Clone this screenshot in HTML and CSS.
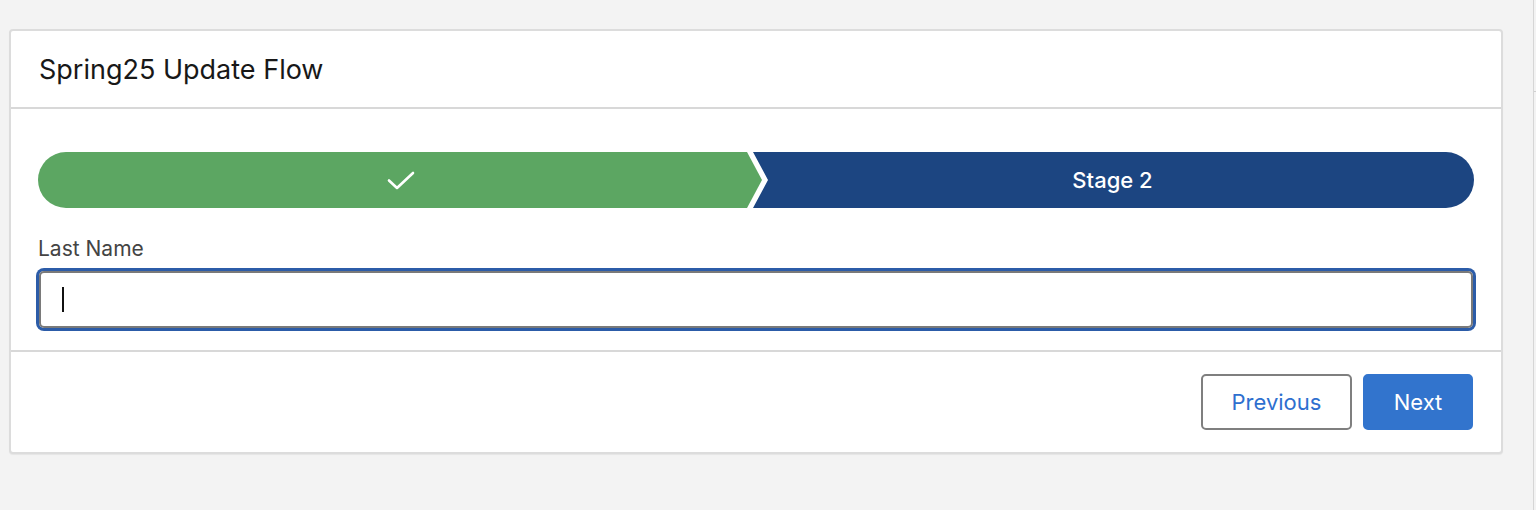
FILE: index.html
```html
<!DOCTYPE html>
<html lang="en">
<head>
<meta charset="utf-8">
<title>Spring25 Update Flow</title>
<link rel="stylesheet" href="styles.css">
</head>
<body>
<div class="page">
  <main class="main">
    <section class="card">
      <header class="card-header">
        <h1 class="card-title">Spring25 Update Flow</h1>
      </header>
      <div class="card-body">
        <div class="path">
          <div class="step step-done">
            <svg class="check" width="28" height="19" viewBox="0 0 28 19" aria-hidden="true">
              <path d="M2 9.5 L10 17 L26 2" fill="none" stroke="#ffffff" stroke-width="2.6" stroke-linecap="round" stroke-linejoin="round"/>
            </svg>
          </div>
          <div class="step step-current">Stage 2</div>
        </div>
        <label class="field-label">Last Name</label>
        <div class="field-input"><span class="caret"></span></div>
      </div>
      <footer class="card-footer">
        <button class="btn btn-neutral" type="button">Previous</button>
        <button class="btn btn-brand" type="button">Next</button>
      </footer>
    </section>
  </main>
  <aside class="side"><div class="side-box"></div></aside>
</div>
</body>
</html>
```

FILE: styles.css
```css
* { box-sizing: border-box; }

html, body {
  margin: 0;
  padding: 0;
  height: 100%;
}

body {
  background: #f3f3f3;
  font-family: "Inter", "Liberation Sans", sans-serif;
  color: #181818;
}

.page {
  display: flex;
  height: 510px;
}

.main {
  width: 1533px;
  padding: 29px 0 0 9px;
}

.side {
  flex: 1;
  border-left: 1px solid #d6d6d6;
  padding-top: 91px;
}

.side-box {
  border-top: 1px solid #d0d0d0;
  height: 100%;
}

.card {
  width: 1494px;
  background: #ffffff;
  border: 2px solid #dcdcdc;
  border-radius: 4px;
  box-shadow: 0 1px 1px rgba(0, 0, 0, 0.06);
}

.card-header {
  height: 78px;
  display: flex;
  align-items: center;
  padding: 0 28px;
  border-bottom: 2px solid #d8d8d8;
}

.card-title {
  margin: 0;
  font-size: 27px;
  font-weight: 400;
  color: #181818;
  letter-spacing: 0;
}

.card-body {
  padding: 43px 27px 22px 27px;
  border-bottom: 2px solid #d8d8d8;
}

.path {
  display: flex;
  height: 56px;
  border-radius: 28px;
  overflow: hidden;
}

.step {
  display: flex;
  align-items: center;
  justify-content: center;
  color: #ffffff;
}

.step-done {
  width: 724px;
  background: #5ca662;
  clip-path: polygon(0 0, calc(100% - 15px) 0, 100% 50%, calc(100% - 15px) 100%, 0 100%);
  margin-right: -9px;
  position: relative;
  z-index: 1;
}

.step-current {
  flex: 1;
  background: #1c4581;
  clip-path: polygon(0 0, 100% 0, 100% 100%, 0 100%, 15px 50%);
  font-size: 22px;
  font-weight: 500;
  padding-right: 2px;
}

.check {
  display: block;
  margin-left: 2px;
}

.field-label {
  display: block;
  margin-top: 28px;
  font-size: 21px;
  line-height: 26px;
  color: #444444;
}

.field-input {
  margin-top: 9px;
  margin-left: 1px;
  margin-right: 1px;
  height: 57px;
  border: 2px solid #7a7a7a;
  border-radius: 5px;
  box-shadow: 0 0 0 3px #2c5ca8;
  display: flex;
  align-items: center;
  padding-left: 21px;
}

.caret {
  display: block;
  width: 2px;
  height: 25px;
  background: #111111;
}

.card-footer {
  display: flex;
  justify-content: flex-end;
  gap: 11px;
  padding: 22px 28px 22px 28px;
}

.btn {
  height: 56px;
  border-radius: 5px;
  font-family: "Inter", "Liberation Sans", sans-serif;
  font-size: 22px;
  font-weight: 400;
  cursor: pointer;
}

.btn-neutral {
  width: 151px;
  background: #ffffff;
  border: 2px solid #7f7f7f;
  color: #2e6fcf;
}

.btn-brand {
  width: 110px;
  background: #3274cd;
  border: 2px solid #3274cd;
  color: #ffffff;
}
```
